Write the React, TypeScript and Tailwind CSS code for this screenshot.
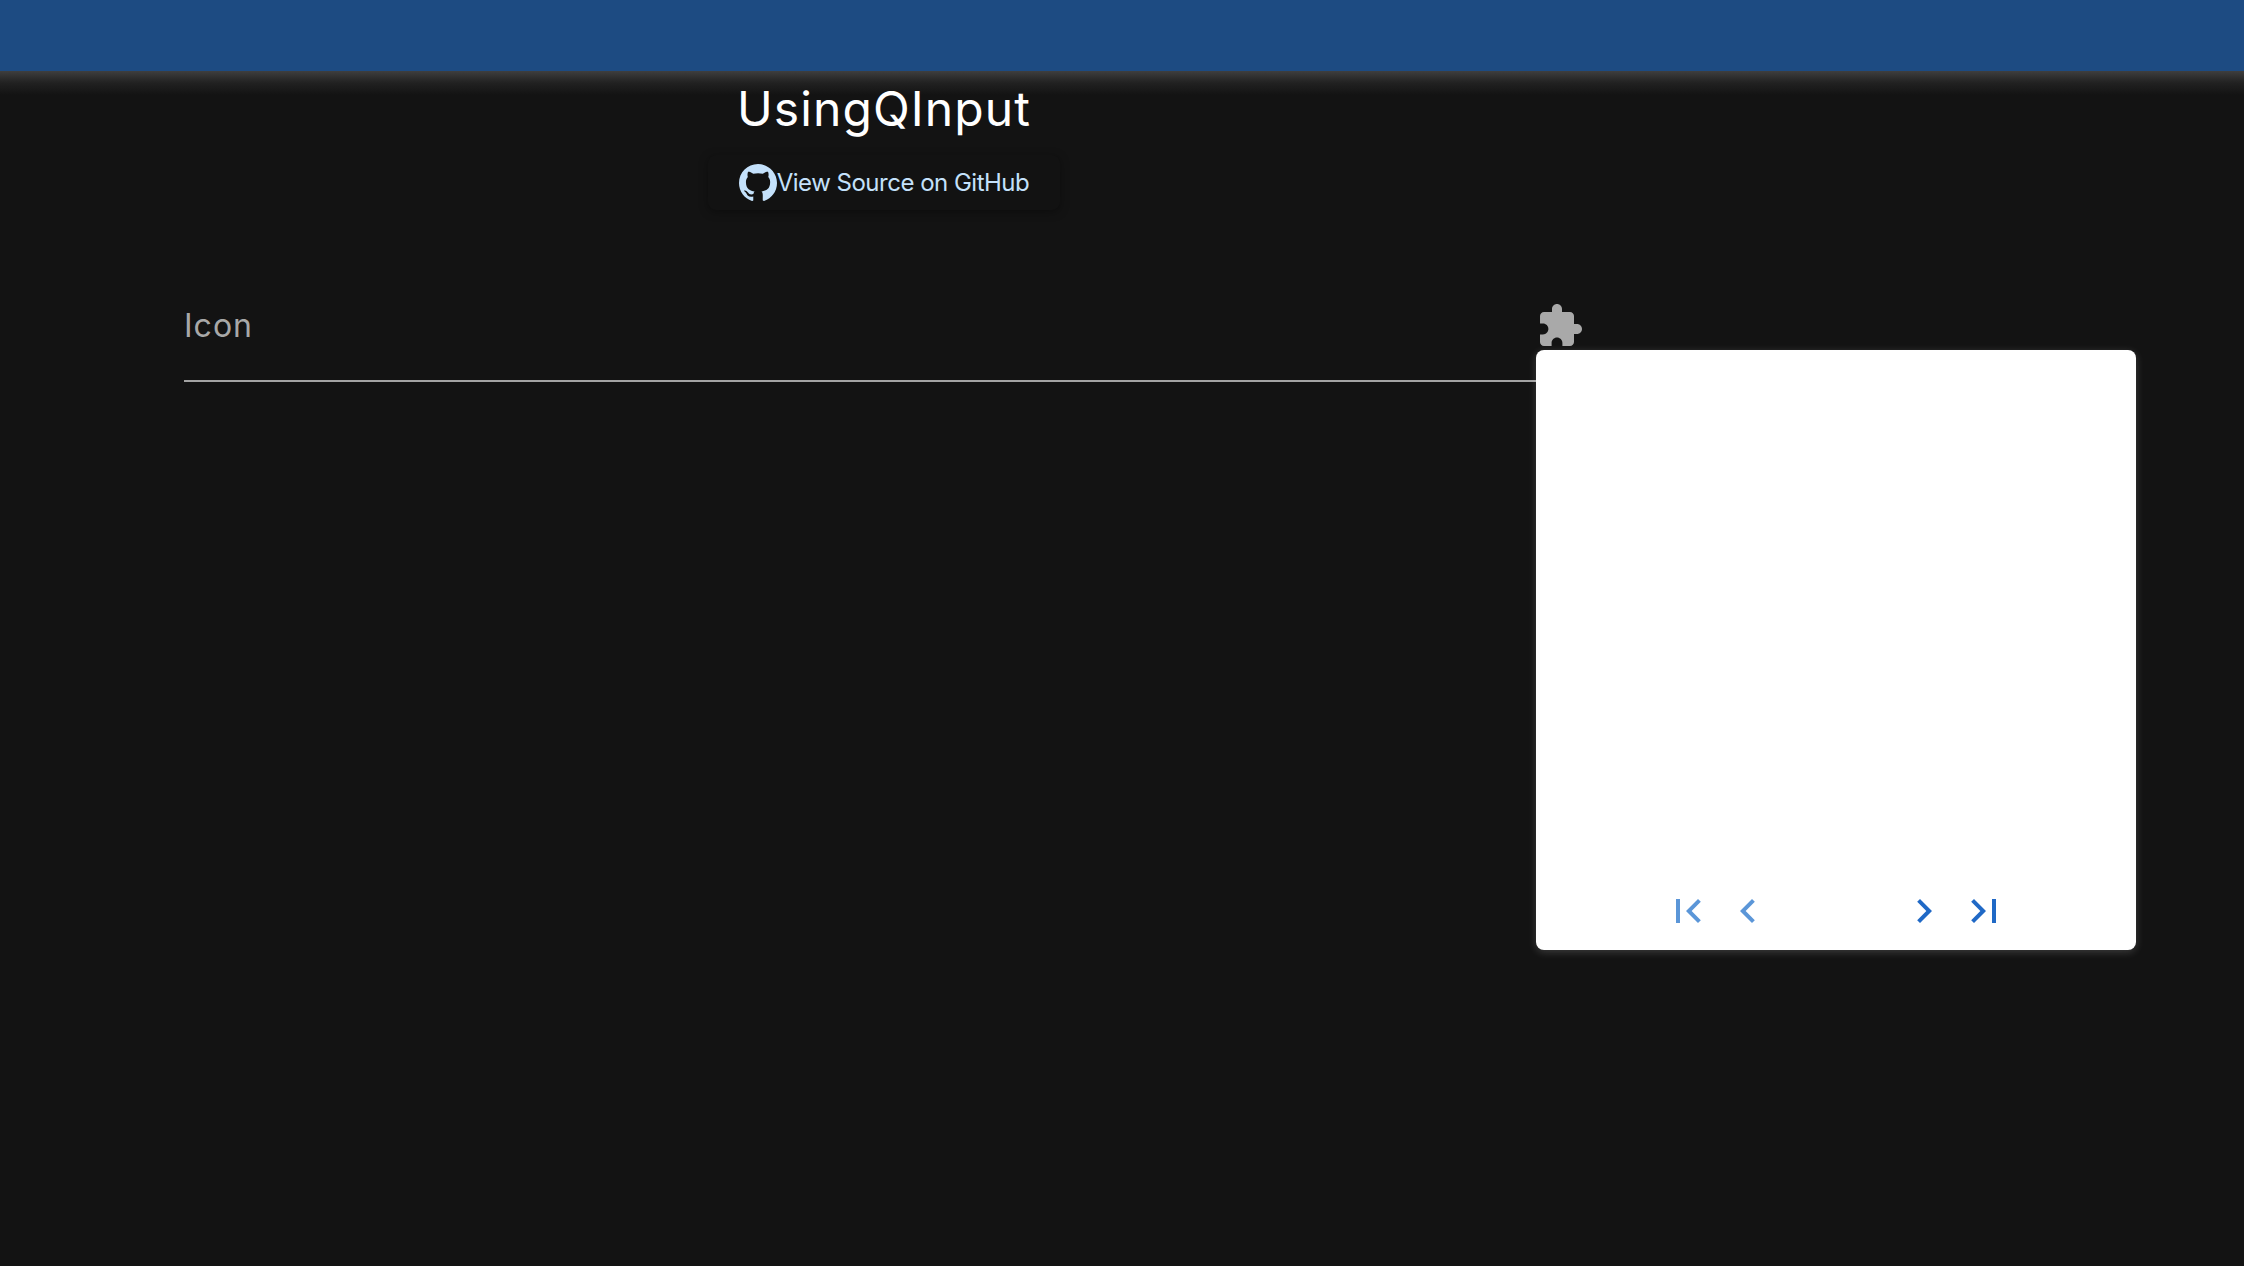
const font = { fontFamily: 'Inter, "Open Sans", sans-serif' }

function MaterialIcon({ d, className }: { d: string; className?: string }) {
  return (
    <svg viewBox="0 0 24 24" fill="currentColor" className={className}>
      <path d={d} />
    </svg>
  )
}

const firstPage = 'M18.41 16.59L13.82 12l4.59-4.59L17 6l-6 6 6 6zM6 6h2v12H6z'
const chevronLeft = 'M15.41 7.41L14 6l-6 6 6 6 1.41-1.41L10.83 12z'
const chevronRight = 'M10 6L8.59 7.41 13.17 12l-4.58 4.59L10 18l6-6z'
const lastPage = 'M5.59 7.41L10.18 12l-4.59 4.59L7 18l6-6-6-6zM16 6h2v12h-2z'
const extension =
  'M20.5 11H19V7c0-1.1-.9-2-2-2h-4V3.5C13 2.12 11.88 1 10.5 1S8 2.12 8 3.5V5H4c-1.1 0-1.99.9-1.99 2v3.8H3.5c1.49 0 2.7 1.21 2.7 2.7s-1.21 2.7-2.7 2.7H2V20c0 1.1.9 2 2 2h3.8v-1.5c0-1.49 1.21-2.7 2.7-2.7 1.49 0 2.7 1.21 2.7 2.7V22H17c1.1 0 2-.9 2-2v-4h1.5c1.38 0 2.5-1.12 2.5-2.5S21.88 11 20.5 11z'
const github =
  'M8 0C3.58 0 0 3.58 0 8c0 3.54 2.29 6.53 5.47 7.59.4.07.55-.17.55-.38 0-.19-.01-.82-.01-1.49-2.01.37-2.53-.49-2.69-.94-.09-.23-.48-.94-.82-1.13-.28-.15-.68-.52-.01-.53.63-.01 1.08.58 1.23.82.72 1.21 1.87.87 2.33.66.07-.52.28-.87.51-1.07-1.78-.2-3.64-.89-3.64-3.95 0-.87.31-1.59.82-2.15-.08-.2-.36-1.02.08-2.12 0 0 .67-.21 2.2.82.64-.18 1.32-.27 2-.27.68 0 1.36.09 2 .27 1.53-1.04 2.2-.82 2.2-.82.44 1.1.16 1.92.08 2.12.51.56.82 1.27.82 2.15 0 3.07-1.87 3.75-3.65 3.95.29.25.54.73.54 1.48 0 1.07-.01 1.93-.01 2.2 0 .21.15.46.55.38A8.013 8.013 0 0016 8c0-4.42-3.58-8-8-8z'

export default function App() {
  return (
    <div style={font} className="relative h-[1266px] w-[2244px] overflow-hidden bg-[#131313]">
      {/* Header */}
      <header className="relative h-[72px] border-b border-[#2a5a94] bg-[#1d4b82]">
        {/* glow under the bar */}
        <div className="absolute top-full right-0 left-0 h-[24px] bg-linear-to-b from-[#3e3e3e] via-[#212121] to-[#131313]" />
      </header>

      {/* Content */}
      <main className="relative ml-[184px] flex w-[1400px] flex-col items-center">
        <h1 className="mt-[9px] text-[48px] leading-[56px] font-normal tracking-[1.1px] text-white">UsingQInput</h1>
        <a className="mt-[18px] flex h-[55px] w-[352px] items-center justify-center rounded-lg bg-[#121212] text-[24px] text-[#c4e1fb] shadow-[0_2px_10px_rgba(0,0,0,0.35)]">
          <svg viewBox="0 0 16 16" fill="currentColor" className="h-[38px] w-[38px]">
            <path d={github} />
          </svg>
          <span className="tracking-[-0.5px]">View Source on GitHub</span>
        </a>

        {/* Input */}
        <div className="mt-[92px] flex h-[80px] w-full items-start justify-between border-b-2 border-[#a3a3a3]">
          <span className="mt-[4px] text-[32px] leading-[40px] tracking-[1px] text-[#a8a8a8]">Icon</span>
          <MaterialIcon d={extension} className="h-[48px] w-[48px] text-[#a9a9a9]" />
        </div>
      </main>

      {/* Date picker popup */}
      <div className="absolute top-[350px] left-[1536px] flex h-[600px] w-[600px] flex-col justify-end rounded-lg bg-white pb-[15px] shadow-[0_2px_8px_rgba(255,255,255,0.18)]">
        <div className="flex items-center justify-center gap-[12px]">
          <MaterialIcon d={firstPage} className="h-[48px] w-[48px] text-[#5b96d8]" />
          <MaterialIcon d={chevronLeft} className="h-[48px] w-[48px] text-[#5b96d8]" />
          <div className="w-[104px]" />
          <MaterialIcon d={chevronRight} className="h-[48px] w-[48px] text-[#2069c6]" />
          <MaterialIcon d={lastPage} className="h-[48px] w-[48px] text-[#2069c6]" />
        </div>
      </div>
    </div>
  )
}
